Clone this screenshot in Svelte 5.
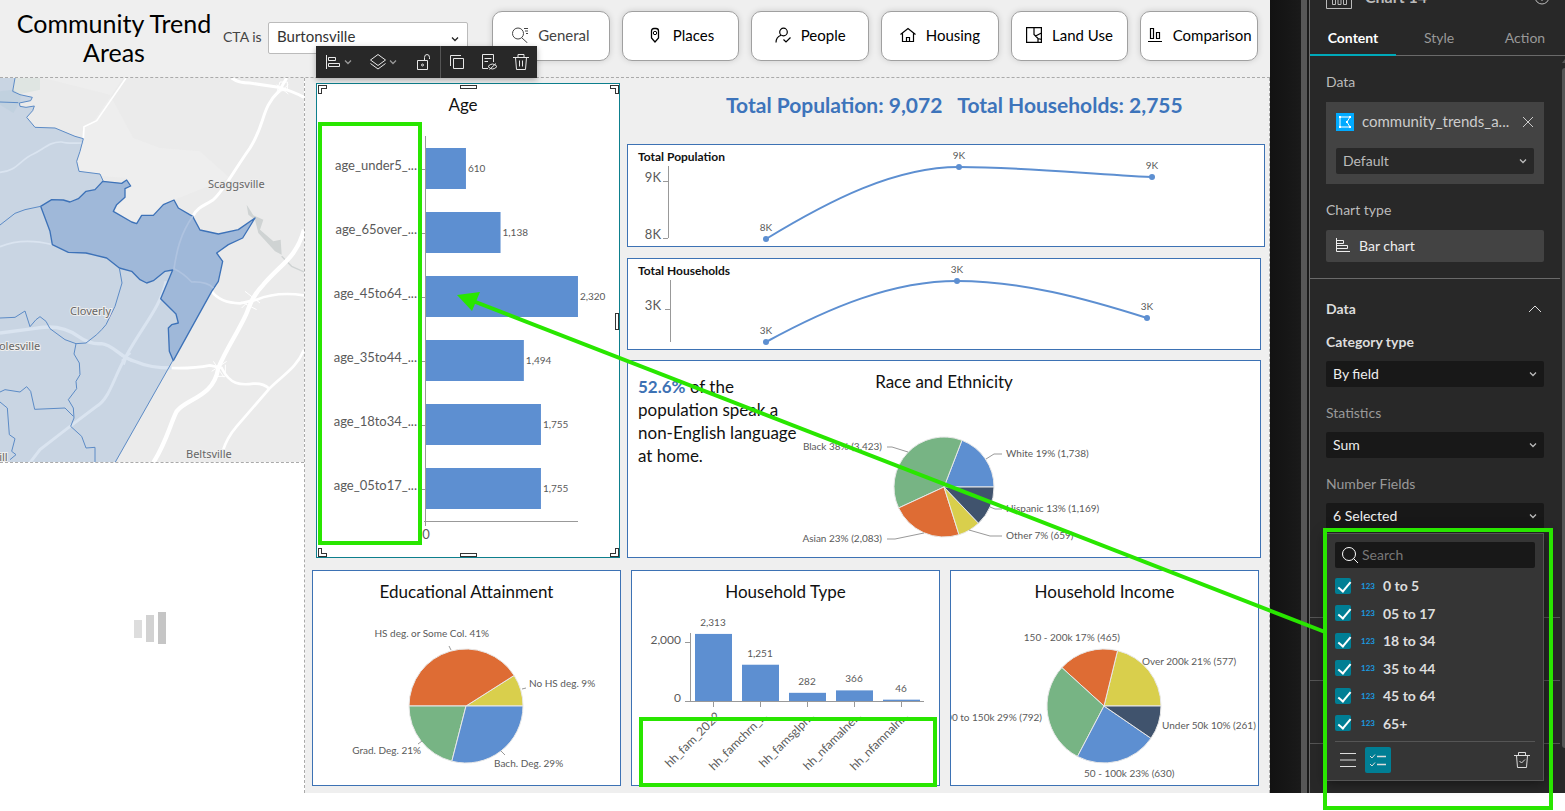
<script>
  let area = 'Burtonsville';
  let view = 'Default';
  let categoryType = 'By field';
  let statistic = 'Sum';
  let search = '';

  const colors = {
    blue: '#5d8fd1',
    green: '#77b484',
    orange: '#de6c34',
    yellow: '#d9cf4c',
    navy: '#40536d'
  };

  const pages = ['General', 'Places', 'People', 'Housing', 'Land Use', 'Comparison'];
  const tabs = ['Content', 'Style', 'Action'];

  let fields = ['0 to 5', '05 to 17', '18 to 34', '35 to 44', '45 to 64', '65+'].map(name => ({
    name,
    checked: true
  }));

  // -------------------------------------------------------

  const ages = [
    { name: 'age_under5_...', value: 610 },
    { name: 'age_65over_...', value: 1138 },
    { name: 'age_45to64_...', value: 2320 },
    { name: 'age_35to44_...', value: 1494 },
    { name: 'age_18to34_...', value: 1755 },
    { name: 'age_05to17_...', value: 1755 }
  ];

  const households = [
    { name: 'hh_fam_2022', value: 2313 },
    { name: 'hh_famchrn_...', value: 1251 },
    { name: 'hh_famsglpr...', value: 282 },
    { name: 'hh_nfamalne...', value: 366 },
    { name: 'hh_nfamnaln...', value: 46 }
  ];

  const trends = [
    {
      title: 'Total Population',
      height: 101,
      wide: true,
      path: 'M138 94C202 55 267 22 331 22C395 22 460 29 524 32',
      axis: 'M40 21V93M35 36H40M35 93H40',
      ticks: [{ y: 37, text: '9K' }, { y: 94, text: '8K' }],
      points: [{ x: 138, y: 94, text: '8K' }, { x: 331, y: 22, text: '9K' }, { x: 524, y: 32, text: '9K' }]
    },
    {
      title: 'Total Households',
      height: 90,
      wide: false,
      path: 'M138 83C202 48 265 22 329 22C393 22 456 39 519 59',
      axis: 'M42 21V83M37 50H42',
      ticks: [{ y: 51, text: '3K' }],
      points: [{ x: 138, y: 83, text: '3K' }, { x: 329, y: 22, text: '3K' }, { x: 519, y: 59, text: '3K' }]
    }
  ];

  // slices start at three o'clock and run counterclockwise
  function slices(cx, cy, r, items) {
    const total = items.reduce((sum, item) => sum + item.value, 0);
    let angle = 0;
    return items.map(item => {
      const start = angle;
      angle += (item.value / total) * Math.PI * 2;
      const x1 = cx + r * Math.cos(start);
      const y1 = cy - r * Math.sin(start);
      const x2 = cx + r * Math.cos(angle);
      const y2 = cy - r * Math.sin(angle);
      const large = angle - start > Math.PI ? 1 : 0;
      return { ...item, d: `M${cx} ${cy}L${x1} ${y1}A${r} ${r} 0 ${large} 0 ${x2} ${y2}Z` };
    });
  }

  const race = slices(316, 126, 50, [
    { value: 1738, color: colors.blue, text: 'White 19% (1,738)', x: 378, y: 96, line: '358,98 366,93 374,93' },
    { value: 3423, color: colors.green, text: 'Black 38% (3,423)', x: 254, y: 89, end: true, line: '280,91 264,86 259,86' },
    { value: 2083, color: colors.orange, text: 'Asian 23% (2,083)', x: 254, y: 181, end: true, line: '296,172 267,178 259,178' },
    { value: 659, color: colors.yellow, text: 'Other 7% (659)', x: 378, y: 178, line: '341,169 362,175 374,175' },
    { value: 1169, color: colors.navy, text: 'Hispanic 13% (1,169)', x: 378, y: 151, line: '362,146 367,148 374,148' }
  ]);

  const education = slices(153, 135, 57, [
    { value: 9, color: colors.yellow, text: 'No HS deg. 9%', x: 216, y: 116, line: '209,118 213,117' },
    { value: 41, color: colors.orange, text: 'HS deg. or Some Col. 41%', x: 176, y: 66, end: true, line: '138,79 136,75' },
    { value: 21, color: colors.green, text: 'Grad. Deg. 21%', x: 108, y: 183, end: true, line: '109,170 105,173' },
    { value: 29, color: colors.blue, text: 'Bach. Deg. 29%', x: 181, y: 196, line: '188,180 192,184' }
  ]);

  const income = slices(153, 135, 57, [
    { value: 577, color: colors.yellow, text: 'Over 200k 21% (577)', x: 191, y: 94 },
    { value: 465, color: colors.orange, text: '150 - 200k 17% (465)', x: 169, y: 70, end: true },
    { value: 792, color: colors.green, text: '100 to 150k 29% (792)', x: 91, y: 150, end: true },
    { value: 630, color: colors.blue, text: '50 - 100k 23% (630)', x: 133, y: 206 },
    { value: 261, color: colors.navy, text: 'Under 50k 10% (261)', x: 211, y: 158 }
  ]);
</script>

{#snippet pie(parts, width, height)}
  <svg class="chart" viewBox="0 0 {width} {height}">
    {#each parts as part}
      <path d={part.d} fill={part.color} stroke="#e8e8e8" />
    {/each}
    {#each parts as part}
      {#if part.line}
        <polyline points={part.line} fill="none" stroke="#999" />
      {/if}
      <text class="small" x={part.x} y={part.y} text-anchor={part.end ? 'end' : 'start'}>{part.text}</text>
    {/each}
  </svg>
{/snippet}

{#snippet chevron()}
  <svg class="chevron" viewBox="0 0 10 10" width="10" height="10">
    <path d="M2 3.500L5 6.500L8 3.500" fill="none" stroke="currentColor" stroke-width="1.300" />
  </svg>
{/snippet}

<div class="app">
  <main>
    <header>
      <h1>Community Trend Areas</h1>
      <label for="area">CTA is</label>
      <div class="select area">
        <select id="area" bind:value={area}>
          <option>Burtonsville</option>
        </select>
        {@render chevron()}
      </div>
      <nav>
        {#each pages as page}
          <button class:dim={page === 'General'}>
            <svg viewBox="0 0 16 16" width="16" height="16" fill="none" stroke="currentColor">
              {#if page === 'General'}
                <circle cx="6" cy="6.500" r="5.500" />
                <path d="M10 11L15.500 16M12 1.500H16M13 4H16M14 6.500H16" />
              {:else if page === 'Places'}
                <path d="M4.500 4Q4.500 1.500 7 1.500H9Q11.500 1.500 11.500 4V11L8 15L4.500 11Z" stroke-width="1.300" />
                <circle cx="8" cy="6" r="1.700" />
              {:else if page === 'People'}
                <circle cx="8.500" cy="5" r="3.800" stroke-width="1.200" />
                <path d="M1 15.500C1 11.500 3 9.500 6 8.300M8.500 12.500L11 15L15.500 10.500" stroke-width="1.200" />
              {:else if page === 'Housing'}
                <path d="M.5 7.500L8 1.500L15.500 7.500M2.500 6.500V14.500H13.500V6.500M6.500 14.500V10.500H9.500V14.500" stroke-width="1.200" />
              {:else if page === 'Land Use'}
                <path d="M.6.6H15.400V15.400H.6ZM8 .6V7.500L9.500 9L15.400 6M9.500 9L12 11.500L15.400 12.500M12 11.500V15.400" stroke-width="1.200" />
              {:else}
                <path d="M1 14.500H15M3.500 1.500H6.500V11.500H3.500ZM9.500 5.500H12.500V11.500H9.500Z" stroke-width="1.200" />
              {/if}
            </svg>
            {page}
          </button>
        {/each}
      </nav>
    </header>

    <div class="body">
      <aside>
        <svg class="map" viewBox="0 0 304 384">
          <svg viewBox="0 0 912 1152" width="304" height="384" fill="none">
            <rect width="912" height="1152" fill="#ebebeb" />
            <path d="M130 0H370L280 130L250 150L230 250L240 280L310 295L380 300L345 400L410 437L520 366L690 300L600 220L480 210L400 180L330 50Z" fill="#eee" />
            <path d="M740 380L760 412L790 425L780 455L820 490L842 485L845 530L825 520L775 465L765 425L745 410Z" fill="#cfd3d3" />
            <path d="M845 535L875 565L912 582" stroke="#cfd3d3" stroke-width="4" />
            <path d="M45 0L38 40L60 50L97 58L92 68L58 75L60 85L78 88L103 84L98 98L80 118L105 148L165 150L225 175L250 182L240 220L230 250L237 280L300 288L310 310L365 316L380 306L392 324L375 332L375 358L350 380L340 400L395 432L410 437L425 412L460 412L490 380L522 366L535 390L578 415L600 456L655 468L715 455L765 420L728 480L685 500L650 525L668 550L655 610L635 640L520 845L345 1154H0V0Z" fill="#c9d5e3" />
            <path d="M45 0L38 40L60 48L120 35V0Z" fill="#dfe5e2" />
            <path d="M0 40L40 35L62 50L60 72L40 105L0 80Z" fill="#bccfdc" opacity=".6" />
            <g stroke="#dae4f0">
              <path d="M0 283C50 280 60 245 100 228C130 214 150 190 185 192C205 198 220 195 250 195" stroke-width="5" />
              <path d="M0 506C50 485 110 488 157 500" stroke-width="5" />
              <path d="M0 765L100 752Q180 735 235 775Q270 800 305 797C340 800 360 840 410 852Q450 870 515 870" stroke-width="10" />
              <path d="M498 610C480 690 430 740 378 835C340 900 330 960 290 985L210 1045L120 1115L90 1154" stroke-width="9" />
              <path d="M360 830L395 850M385 822L372 860M365 848L392 825" stroke-width="5" />
            </g>
            <g stroke="#fff">
              <path d="M378 0L290 128L252 146L250 182" stroke-width="5" />
              <path d="M695 0Q715 15 750 15L835 28Q880 40 912 58M860 0L838 38C780 95 800 130 750 210C700 280 670 340 640 365C610 385 595 385 580 412" stroke-width="9" />
              <path d="M830 20L865 48M865 20L832 50M840 12H862V38H832Z" stroke-width="3" />
              <path d="M912 455C890 540 840 560 790 620C760 650 750 680 738 710C710 770 680 810 655 870C640 960 560 960 530 1000C510 1040 500 1090 460 1154" stroke-width="13" />
              <path d="M635 640Q660 675 720 676L770 665Q830 640 912 652" stroke-width="8" />
              <path d="M515 870Q580 872 630 862L665 870C690 920 720 922 760 917Q790 915 808 932M912 815C890 870 850 890 808 932L710 1045Q680 1080 668 1120" stroke-width="8" />
              <path d="M725 672L770 695M735 640L780 675M725 690L770 645M640 850L672 898M635 880L680 850M650 895H676V860" stroke-width="3" />
            </g>
            <path d="M122 385L155 365L190 366L210 372L235 362L258 340L285 335L308 310L365 316L380 306L392 324L375 332L375 358L350 380L340 400L395 432L410 437L425 412L460 412L490 380L522 366L535 390L578 415L600 456L655 468L715 455L765 420L728 480L685 500L650 525L668 550L655 610L635 640L520 848L508 820L505 750L515 740L535 735L528 708L482 662L518 576L495 580L460 608L440 615L420 605L395 580L358 570L320 540L258 525L205 523L157 500L150 460Z" fill="#9fb8d9" stroke="#3d72b8" stroke-width="4" stroke-linejoin="round" />
            <path d="M578 415C540 470 530 520 522 572Q550 585 575 612Q620 610 640 630" stroke="#afc3e0" stroke-width="5" />
            <g stroke="#5c8bc6" stroke-width="3" stroke-linejoin="round">
              <path d="M45 0L38 40L60 50L97 58L92 68L58 75L60 85L78 88L103 84L98 98L80 118L105 148L165 150L225 175L250 182L240 220L230 250L237 280L300 288L310 310M0 72L55 74" />
              <path d="M0 441L45 406L75 395L122 385M358 570L366 615L345 685L318 740L305 755L290 770L258 795L228 797L195 785L150 752L138 730L120 716L108 725L90 746L75 699L45 718L0 720" />
              <path d="M228 797L222 828L238 855L240 890L228 910L230 932L205 965L220 990L222 1020L212 1045L245 1075L258 1110L285 1108V1154M0 942L15 935L60 942L80 926L92 940L104 994L195 990L220 1015M0 972L22 990L28 1070L45 1082L35 1120L48 1130L30 1145M520 845L345 1154" />
            </g>
          </svg>
          <text x="208" y="110">Scaggsville</text>
          <text x="70" y="237">Cloverly</text>
          <text x="-8" y="272">Colesville</text>
          <text x="186" y="380">Beltsville</text>
          <text x="-9" y="383">Hill</text>
        </svg>
        <div class="loading">
          <svg viewBox="0 0 32 32" width="32" height="32">
            <rect y="8" width="8" height="18" fill="#ddd" />
            <rect x="12" y="3" width="8" height="27" fill="#d2d2d2" />
            <rect x="24" width="8" height="32" fill="#c5c5c5" />
          </svg>
        </div>
      </aside>

      <section class="board">
        <div class="top">
          <article class="card age">
            <h2>Age</h2>
            <svg class="chart" viewBox="0 0 302 473">
              <path d="M108 52V442M107 437H261" class="axis" />
              {#each ages as age, i}
                <rect x="109" y={64 + i * 64} width={age.value * 0.0655} height="41" fill={colors.blue} />
                <path d="M104 {85 + i * 64}H108" class="axis" />
                <text x="100" y={86 + i * 64} text-anchor="end">{age.name}</text>
                <text class="small" x={111 + age.value * 0.0655} y={88 + i * 64}>{age.value.toLocaleString('en-US')}</text>
              {/each}
              <text x="109" y="455" text-anchor="middle">0</text>
              <g class="handles">
                <path d="M1 1H9V4H4V9H1ZM301 1H293V4H298V9H301ZM1 472H9V469H4V464H1ZM301 472H293V469H298V464H301Z" />
                <path d="M143 1H159V4H143ZM143 469H159V472H143ZM1 229H4V245H1ZM298 229H301V245H298Z" />
              </g>
            </svg>
          </article>

          <div class="column">
            <div class="totals">
              <span>Total Population: 9,072</span>
              <span>Total Households: 2,755</span>
            </div>
            {#each trends as trend}
              <article class="card" class:wide={trend.wide}>
                <h3>{trend.title}</h3>
                <svg class="chart" viewBox="0 0 {trend.wide ? 636 : 632} {trend.height}">
                  <path d={trend.axis} class="axis" />
                  {#each trend.ticks as tick}
                    <text x="33" y={tick.y} text-anchor="end">{tick.text}</text>
                  {/each}
                  <path d={trend.path} fill="none" stroke={colors.blue} stroke-width="2" />
                  {#each trend.points as point}
                    <circle cx={point.x} cy={point.y} r="3" fill={colors.blue} />
                    <text class="small" x={point.x} y={point.y - 8} text-anchor="middle">{point.text}</text>
                  {/each}
                </svg>
              </article>
            {/each}
            <article class="card">
              <h2>Race and Ethnicity</h2>
              {@render pie(race, 632, 196)}
              <p><b>52.6%</b> of the population speak a non-English language at home.</p>
            </article>
          </div>
        </div>

        <div class="bottom">
          <article class="card">
            <h2>Educational Attainment</h2>
            {@render pie(education, 307, 214)}
          </article>
          <article class="card">
            <h2>Household Type</h2>
            <svg class="chart households" viewBox="0 0 307 214">
              <path d="M58 62V130M53 71H58M53 130H292" class="axis" />
              <text x="49" y="73" text-anchor="end">2,000</text>
              <text x="49" y="131" text-anchor="end">0</text>
              {#each households as household, i}
                <rect x={63 + i * 47} y={130 - household.value * 0.029} width="37" height={household.value * 0.029} fill={colors.blue} />
                <path d="M{81 + i * 47} 130V136" class="axis" />
                <text class="small" x={81 + i * 47} y={122 - household.value * 0.029} text-anchor="middle">{household.value.toLocaleString('en-US')}</text>
                <text transform="translate({89 + i * 47} 146) rotate(-45)" text-anchor="end">{household.name}</text>
              {/each}
            </svg>
          </article>
          <article class="card">
            <h2>Household Income</h2>
            {@render pie(income, 307, 214)}
          </article>
        </div>
      </section>
    </div>

    <div class="toolbar">
      <button class="menu" aria-label="Align">
        <svg viewBox="0 0 16 16" width="16" height="16"><path d="M1.500 1V15M3.500 3.500H10.500V6.500H3.500ZM3.500 9.500H14.500V12.500H3.500Z" /></svg>
        {@render chevron()}
      </button>
      <button class="menu" aria-label="Arrange">
        <svg viewBox="0 0 16 16" width="16" height="16"><path d="M8 .5L15.500 6L8 11.500L.5 6ZM.5 9.500L8 15L15.500 9.500" /></svg>
        {@render chevron()}
      </button>
      <button class="lock" aria-label="Lock">
        <svg viewBox="0 0 16 16" width="16" height="16"><path d="M2.500 6.500H12.500V15.500H2.500ZM9.500 6.500V3.500Q9.500 .5 12 .5T14.500 3.500V5" /><circle cx="7.500" cy="11" r="1" /></svg>
      </button>
      <button aria-label="Duplicate">
        <svg viewBox="0 0 16 16" width="16" height="16"><path d="M4.500 4.500H14.500V14.500H4.500ZM1.500 12V1.500H12" /></svg>
      </button>
      <button aria-label="Pending">
        <svg viewBox="0 0 16 16" width="16" height="16"><path d="M7 14.500H1.500V.5H12.500V8M3.500 4.500H10.500M3.500 7.500H7M7 12.500Q11.500 7.500 16 12.500Q11.500 17.500 7 12.500M8.500 15.500L15 9.500" /></svg>
      </button>
      <button aria-label="Delete">
        <svg viewBox="0 0 16 16" width="16" height="16"><path d="M0 3.500H16M5 3.500V.5H11V3.500M2.500 3.500L3.500 15.500H12.500L13.500 3.500M6.500 6.500V12.500M9.500 6.500V12.500" /></svg>
      </button>
    </div>
  </main>

  <div class="gutter"></div>

  <div class="inspector">
    <div class="heading">
      <svg viewBox="0 0 26 24" width="26" height="24" fill="none" stroke="currentColor">
        <path d="M.5 .5H25.500V23.500H.5ZM6.500 10V19.500H9.500V10ZM12 7V19.500H15V7ZM17.500 10V19.500H20.500V10Z" />
      </svg>
      <strong>Chart 14</strong>
      <svg viewBox="0 0 16 20" width="16" height="20" fill="none" stroke="currentColor">
        <circle cx="8" cy="8" r="7" /><path d="M8 7V12" />
      </svg>
    </div>
    <div class="tabs">
      {#each tabs as tab, i}
        <button class:active={i === 0}>{tab}</button>
      {/each}
    </div>

    <div class="scroll">
      <div class="panel">
        <section class="source">
          <h4>Data</h4>
          <div class="dataset">
            <div class="name">
              <svg viewBox="0 0 18 18" width="18" height="18">
                <rect width="18" height="18" fill="#0af" />
                <path d="M4 4H14L11 9L14 14H4Z" fill="none" stroke="#fff" />
                <path d="M3 3H5V5H3ZM13 3H15V5H13ZM3 13H5V15H3ZM13 13H15V15H13ZM10 8H12V10H10Z" fill="#fff" />
              </svg>
              <span>community_trends_a...</span>
              <button aria-label="Remove">
                <svg viewBox="0 0 12 12" width="12" height="12"><path d="M1 1L11 11M11 1L1 11" stroke="currentColor" /></svg>
              </button>
            </div>
            <div class="select">
              <select aria-label="Data view" bind:value={view}>
                <option>Default</option>
              </select>
              {@render chevron()}
            </div>
          </div>
          <h4>Chart type</h4>
          <button class="type">
            <svg viewBox="0 0 14 14" width="14" height="14" fill="none" stroke="currentColor">
              <path d="M.5 0V13.500H14M.5 2.500H7.500V5.500H.5M.5 7.500H11.500V10.500H.5" />
            </svg>
            Bar chart
          </button>
        </section>

        <section class="data">
          <div class="title">
            <h4>Data</h4>
            <button aria-label="Collapse">
              <svg viewBox="0 0 14 8" width="14" height="8"><path d="M1 7L7 1L13 7" fill="none" stroke="currentColor" /></svg>
            </button>
          </div>
          <label class="strong" for="category">Category type</label>
          <div class="select dark">
            <select id="category" bind:value={categoryType}>
              <option>By field</option>
            </select>
            {@render chevron()}
          </div>
          <label for="statistics">Statistics</label>
          <div class="select dark">
            <select id="statistics" bind:value={statistic}>
              <option>Sum</option>
            </select>
            {@render chevron()}
          </div>
          <label for="fields">Number Fields</label>
          <div class="select dark">
            <button id="fields" aria-expanded="true">{fields.filter(f => f.checked).length} Selected</button>
            {@render chevron()}
            <div class="dropdown">
              <div class="search">
                <svg viewBox="0 0 18 18" width="18" height="18" fill="none" stroke="#fff"><circle cx="8" cy="8" r="6.500" /><path d="M12.500 12.500L17 17" /></svg>
                <input type="search" placeholder="Search" aria-label="Search" bind:value={search}>
              </div>
              <div class="list">
                {#each fields as field}
                  <label>
                    <input type="checkbox" bind:checked={field.checked}>
                    <small>123</small>
                    {field.name}
                  </label>
                {/each}
              </div>
              <div class="actions">
                <button aria-label="List">
                  <svg viewBox="0 0 16 16" width="16" height="16"><path d="M0 1.500H16M0 8H16M0 14.500H16" /></svg>
                </button>
                <button class="on" aria-label="Multiple selection">
                  <svg viewBox="0 0 16 16" width="16" height="16"><path d="M7 4.500H16M7 12.500H16" stroke-width="1.500" /><path d="M0 4L2 6L5 2.500M0 12L2 14L5 10.500" /></svg>
                </button>
                <button aria-label="Clear selection">
                  <svg viewBox="0 0 16 16" width="16" height="16"><path d="M0 3.500H16M4.500 3.500V.5H11.500V3.500M2.500 3.500L3.500 15.500H12.500L13.500 3.500M5.500 9L7.500 11L11 7.500" /></svg>
                </button>
              </div>
            </div>
          </div>
        </section>
        <section class="closed"></section>
        <section class="closed"></section>
        <section class="closed last"></section>
      </div>
      <div class="scrollbar">
        <i></i>
        <b></b>
      </div>
    </div>
  </div>

  <!-- markup drawn over the whole page -->
  <svg class="marks">
    <path d="M320 124H420V543H320ZM641 719H935V785H641ZM1325 530H1551V808H1325Z" />
    <path d="M1325 632L473 301" />
    <polygon points="457,295 480,292 472,311" />
  </svg>
</div>

<style>
  :global(body) {
    background: #fff;
  }

  .app {
    position: relative;
    display: flex;
    overflow: hidden;
    padding-bottom: 18px;
    font-family: Lato, "Open Sans", sans-serif;
    font-size: 15px;
    color: #111;
  }

  .app * {
    box-sizing: border-box;
  }

  h1, h2, h3, h4, p {
    margin: 0;
    font-weight: 400;
  }

  button, select, input {
    margin: 0;
    font: inherit;
    color: inherit;
  }

  button {
    display: flex;
    align-items: center;
    padding: 0;
    border: 0;
    background: none;
  }

  svg {
    display: block;
    flex: none;
  }

  main {
    position: relative;
    flex: 1;
    min-width: 0;
  }

  /* header */

  header {
    display: flex;
    height: 78px;
    padding-left: 10px;
    border-bottom: 1px dashed #aaa;
    background: #efefef;
  }

  h1 {
    width: 208px;
    padding-top: 9px;
    font-size: 25px;
    line-height: 29px;
    text-align: center;
    color: #000;
  }

  header label {
    width: 50px;
    padding: 27px 0 0 5px;
    font-size: 14px;
    line-height: 20px;
    color: #444;
  }

  .select {
    position: relative;
  }

  .select select,
  .select > button {
    appearance: none;
    display: block;
    width: 100%;
    height: 26px;
    padding: 0 24px 2px 7px;
    border: 0;
    border-radius: 2px;
    background: #282828;
    color: #bbb;
    font-size: 14px;
    text-align: left;
  }

  .select.dark select,
  .select.dark > button {
    background: #181818;
    color: #eee;
  }

  .select > :global(.chevron) {
    position: absolute;
    right: 6px;
    top: 8px;
    color: #bbb;
  }

  .select.area {
    width: 200px;
    margin: 22px 24px 0 0;
  }

  .select.area select {
    height: 32px;
    padding: 0 24px 4px 8px;
    border: 1px solid #bbb;
    background: #fff;
    color: #333;
    font-size: 15px;
  }

  .select.area > :global(.chevron) {
    right: 8px;
    top: 12px;
    color: #222;
  }

  nav {
    display: flex;
    flex: 1;
    gap: 12px;
    padding: 11px 12px 16px 0;
  }

  nav button {
    flex: 1;
    justify-content: center;
    gap: 10px;
    padding-bottom: 2px;
    border: 1px solid #a0a0a0;
    border-radius: 10px;
    background: #fff;
    box-shadow: 0 0 6px rgba(0, 0, 0, .15);
    color: #000;
    white-space: nowrap;
  }

  nav button.dim {
    color: #444;
  }

  /* map and board */

  .body {
    display: flex;
  }

  aside {
    display: flex;
    flex-direction: column;
    width: 305px;
    border-right: 1px dashed #aaa;
    background: #fff;
  }

  .map {
    width: 100%;
    height: auto;
  }

  .map text {
    font-family: "Noto Sans", sans-serif;
    font-size: 11px;
    fill: #666;
    stroke: #eee;
    stroke-width: 2px;
    paint-order: stroke;
  }

  .loading {
    display: flex;
    flex: 1;
    align-items: center;
    justify-content: center;
    padding-right: 4px;
    border-top: 1px dashed #aaa;
  }

  .board {
    flex: 1;
    min-width: 0;
    padding: 5px 8px 7px 7px;
    border-right: 1px dashed #aaa;
    background: #efefef;
  }

  .top {
    display: flex;
    gap: 7px;
    padding-left: 4px;
    margin-bottom: 12px;
  }

  .column {
    display: flex;
    flex: 1;
    flex-direction: column;
    justify-content: space-between;
  }

  .bottom {
    display: grid;
    grid-template-columns: repeat(3, 1fr);
    gap: 10px;
    padding-right: 2px;
  }

  .card {
    display: grid;
    border: 1px solid #3d72b4;
    background: #fff;
  }

  .card > :global(*) {
    grid-area: 1 / 1;
  }

  .card.age {
    width: 304px;
    border-color: #0d7f8d;
  }

  .card.age h2 {
    padding-right: 10px;
  }

  .card.wide {
    margin-right: -4px;
  }

  .chart {
    width: 100%;
    height: auto;
    font-size: 13px;
    fill: #5a5a5a;
  }

  .chart.households {
    font-size: 12px;
  }

  .chart .small {
    font-size: 10px;
  }

  .axis {
    fill: none;
    stroke: #999;
    shape-rendering: crispEdges;
  }

  .handles {
    fill: #fff;
    stroke: #333;
    shape-rendering: crispEdges;
  }

  h2 {
    padding-top: 10px;
    font-size: 17px;
    line-height: 22px;
    text-align: center;
    color: #111;
  }

  h3 {
    padding: 4px 10px;
    font-size: 12px;
    line-height: 16px;
    font-weight: 700;
  }

  .card p {
    width: 175px;
    padding: 14px 0 0 10px;
    font-size: 17px;
    line-height: 23px;
  }

  .card p b {
    color: #3d72b4;
  }

  .totals {
    display: flex;
    gap: 15px;
    height: 51px;
    padding: 10px 0 0 99px;
    font-size: 21px;
    line-height: 24px;
    font-weight: 700;
    color: #3d74bb;
  }

  /* floating toolbar */

  .toolbar {
    position: absolute;
    left: 316px;
    top: 46px;
    display: flex;
    height: 32px;
    background: #282828;
    color: #999;
    box-shadow: 0 2px 6px rgba(0, 0, 0, .3);
  }

  .toolbar button {
    justify-content: center;
    width: 32px;
  }

  .toolbar .menu {
    width: 45px;
    gap: 2px;
  }

  .toolbar .lock {
    width: 35px;
    border-right: 1px solid #555;
  }

  .toolbar button > svg {
    fill: none;
    stroke: #e8e8e8;
  }

  /* inspector */

  .gutter {
    width: 40px;
    border-right: 1px solid #6a6a6a;
    background: linear-gradient(90deg, #121212 0, #1a1a1a 31px, #575757 31px, #575757 37px, #1a1a1a 37px);
  }

  .inspector {
    display: flex;
    flex-direction: column;
    width: 255px;
    background: #282828;
    color: #bbb;
  }

  .heading {
    display: flex;
    align-items: flex-end;
    gap: 13px;
    height: 9px;
    padding: 0 15px 0 16px;
    overflow: hidden;
    line-height: 24px;
  }

  .heading strong {
    flex: 1;
    font-size: 16px;
  }

  .tabs {
    display: flex;
    height: 36px;
    margin-top: 11px;
    border-bottom: 1px solid #6a6a6a;
  }

  .tabs button {
    flex: 0 0 86px;
    justify-content: center;
    height: 36px;
    padding-bottom: 2px;
    font-size: 14px;
    color: #999;
  }

  .tabs button.active {
    padding-bottom: 0;
    border-bottom: 2px solid #00a9b9;
    color: #fff;
    font-weight: 700;
  }

  .scroll {
    display: flex;
    flex: 1;
  }

  .panel {
    flex: 1;
  }

  .scrollbar {
    width: 5px;
    padding: 3px 0 0 2px;
  }

  .scrollbar i {
    display: block;
    height: 4px;
    margin-bottom: 5px;
    background: #555;
    clip-path: polygon(0 100%, 100% 0, 100% 100%);
  }

  .scrollbar b {
    display: block;
    height: 680px;
    border-radius: 3px 0 0 3px;
    background: #555;
  }

  .panel section {
    padding: 0 16px;
  }

  .panel section.source {
    padding-top: 16px;
    padding-bottom: 16px;
    border-bottom: 1px solid #6a6a6a;
  }

  h4 {
    font-size: 14px;
    line-height: 20px;
  }

  .dataset {
    height: 82px;
    margin: 10px 0 16px;
    padding: 10px;
    background: #434343;
  }

  .name {
    display: flex;
    align-items: center;
    gap: 8px;
    height: 20px;
    margin-bottom: 16px;
    font-size: 15px;
    line-height: 20px;
    color: #ccc;
  }

  .name span {
    flex: 1;
    padding-bottom: 2px;
  }

  .type {
    gap: 9px;
    width: 100%;
    height: 32px;
    margin-top: 10px;
    padding: 0 10px 2px;
    border-radius: 2px;
    background: #434343;
    color: #eee;
    font-size: 14px;
  }

  .title {
    display: flex;
    align-items: center;
    justify-content: space-between;
    height: 20px;
    margin-top: 20px;
    padding-right: 2px;
    color: #ddd;
  }

  .title h4,
  .panel .strong {
    font-weight: 700;
    color: #ddd;
  }

  .data > label {
    display: block;
    margin: 16px 0 9px;
    font-size: 14px;
    line-height: 20px;
    color: #999;
  }

  .data > .strong {
    margin: 13px 0 9px;
  }

  .dropdown {
    position: absolute;
    top: 30px;
    left: 0;
    width: 218px;
    height: 248px;
    padding: 8px;
    border: 1px solid #555;
    background: #353535;
    box-shadow: 0 2px 12px rgba(0, 0, 0, .5);
  }

  .search {
    display: flex;
    align-items: center;
    gap: 3px;
    height: 26px;
    padding-left: 6px;
    border-radius: 2px;
    background: #181818;
  }

  .search input {
    width: 150px;
    padding: 0 0 2px;
    border: 0;
    outline: 0;
    background: none;
    font-size: 14px;
  }

  .search input::placeholder {
    color: #777;
  }

  .list {
    display: grid;
    grid-template-rows: repeat(6, 1fr);
    height: 174px;
    padding: 4px 0;
    border-bottom: 1px solid #555;
  }

  .list label {
    display: flex;
    align-items: center;
    font-size: 14px;
    font-weight: 700;
    color: #ddd;
  }

  .list input {
    appearance: none;
    width: 16px;
    height: 16px;
    border-radius: 2px;
    background: #007e94;
  }

  .list input:checked::before {
    content: "";
    display: block;
    width: 11px;
    height: 5px;
    margin: 4px 0 0 3px;
    border: solid #fff;
    border-width: 0 0 2px 2px;
    transform: rotate(-50deg);
  }

  .list small {
    flex: 0 0 32px;
    padding-left: 10px;
    font-size: 8px;
    color: #1a9be0;
  }

  .actions {
    display: flex;
    align-items: center;
    gap: 4px;
    padding-top: 5px;
  }

  .actions button {
    justify-content: center;
    width: 26px;
    height: 26px;
  }

  .actions button.on {
    border-radius: 2px;
    background: #007e94;
  }

  .actions button:last-child {
    margin-left: auto;
  }

  .actions svg {
    fill: none;
    stroke: #ddd;
  }

  .panel section.closed {
    height: 63px;
    border-top: 1px solid #555;
  }

  .panel section.data {
    padding-bottom: 88px;
  }

  .panel section.last {
    height: 50px;
  }

  .marks {
    position: absolute;
    inset: 0;
    width: 100%;
    height: 100%;
    fill: none;
    stroke: #29e600;
    stroke-width: 4px;
    pointer-events: none;
  }

  .marks polygon {
    fill: #29e600;
    stroke: none;
  }
</style>
